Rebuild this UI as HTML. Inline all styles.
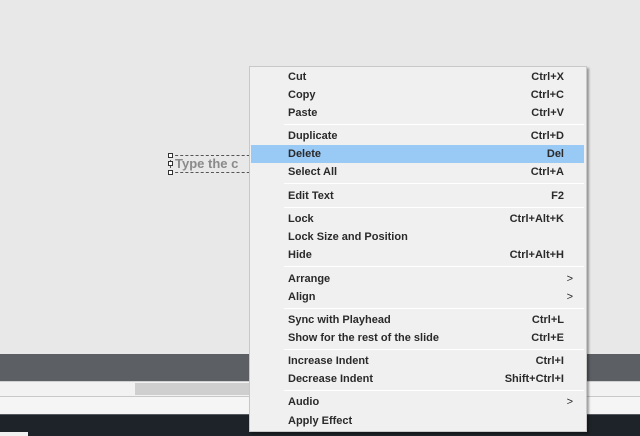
<!DOCTYPE html>
<html><head><style>
*{margin:0;padding:0;box-sizing:border-box}
body{width:640px;height:436px;overflow:hidden;background:#e8e8e8;position:relative;font-family:"Liberation Sans",sans-serif}
.a{position:absolute}
#menu{position:absolute;z-index:10;left:249px;top:66px;width:338px;height:366px;background:#f0f0f0;border:1px solid #c8c8c8;box-shadow:2px 2px 2px rgba(0,0,0,0.35)}
.r{position:absolute;left:0;width:336px;height:18px;font-size:11px;font-weight:bold;color:#2a2a2a;line-height:18px}
.r .t{position:absolute;left:38px}
.r .k{position:absolute;right:22px}
.r .ar{position:absolute;right:13px;font-weight:normal}
.sep{position:absolute;left:34px;width:300px;height:1px;background:#dcdcdc;border-bottom:1px solid #fff}
.hl{background:#99c9f5;left:1px;width:333px}
</style></head><body>
<div class="a" style="left:0;top:354px;width:640px;height:27px;background:#5c5f64"></div>
<div class="a" style="left:0;top:381px;width:640px;height:15px;background:#f2f2f2;border-top:1px solid #d0d0d0"></div>
<div class="a" style="left:135px;top:383px;width:115px;height:12px;background:#cfcfcf"></div>
<div class="a" style="left:0;top:396px;width:640px;height:18px;background:#f5f5f5;border-top:1px solid #c8c8c8"></div>
<div class="a" style="left:0;top:414px;width:640px;height:22px;background:#1d2328;border-top:1px solid #55585c"></div>
<div class="a" style="left:0;top:432px;width:28px;height:4px;background:#f0f0f0"></div>
<div class="a" style="left:170px;top:155px;width:90px;height:18px;border:1px dashed #555"></div>
<div class="a" style="left:168px;top:153px;width:5px;height:5px;border:1px solid #333;background:#fff"></div>
<div class="a" style="left:168px;top:161px;width:5px;height:5px;border:1px solid #333;background:#fff"></div>
<div class="a" style="left:168px;top:170px;width:5px;height:5px;border:1px solid #333;background:#fff"></div>
<div class="a" style="left:175px;top:156px;font-size:13px;font-weight:bold;color:#8a8a8a">Type the c</div>
<div id="menu">
<div class="r" style="top:1px"><span class="t">Cut</span><span class="k">Ctrl+X</span></div>
<div class="r" style="top:19px"><span class="t">Copy</span><span class="k">Ctrl+C</span></div>
<div class="r" style="top:37px"><span class="t">Paste</span><span class="k">Ctrl+V</span></div>
<div class="sep" style="top:57px"></div>
<div class="r" style="top:60px"><span class="t">Duplicate</span><span class="k">Ctrl+D</span></div>
<div class="r hl" style="top:78px"><span class="t" style="left:37px">Delete</span><span class="k" style="right:20px">Del</span></div>
<div class="r" style="top:96px"><span class="t">Select All</span><span class="k">Ctrl+A</span></div>
<div class="sep" style="top:116px"></div>
<div class="r" style="top:120px"><span class="t">Edit Text</span><span class="k">F2</span></div>
<div class="sep" style="top:140px"></div>
<div class="r" style="top:143px"><span class="t">Lock</span><span class="k">Ctrl+Alt+K</span></div>
<div class="r" style="top:161px"><span class="t">Lock Size and Position</span></div>
<div class="r" style="top:179px"><span class="t">Hide</span><span class="k">Ctrl+Alt+H</span></div>
<div class="sep" style="top:199px"></div>
<div class="r" style="top:203px"><span class="t">Arrange</span><span class="ar">&gt;</span></div>
<div class="r" style="top:221px"><span class="t">Align</span><span class="ar">&gt;</span></div>
<div class="sep" style="top:241px"></div>
<div class="r" style="top:244px"><span class="t">Sync with Playhead</span><span class="k">Ctrl+L</span></div>
<div class="r" style="top:262px"><span class="t">Show for the rest of the slide</span><span class="k">Ctrl+E</span></div>
<div class="sep" style="top:282px"></div>
<div class="r" style="top:285px"><span class="t">Increase Indent</span><span class="k">Ctrl+I</span></div>
<div class="r" style="top:303px"><span class="t">Decrease Indent</span><span class="k">Shift+Ctrl+I</span></div>
<div class="sep" style="top:323px"></div>
<div class="r" style="top:326px"><span class="t">Audio</span><span class="ar">&gt;</span></div>
<div class="r" style="top:345px"><span class="t">Apply Effect</span></div>
</div>
</body></html>
